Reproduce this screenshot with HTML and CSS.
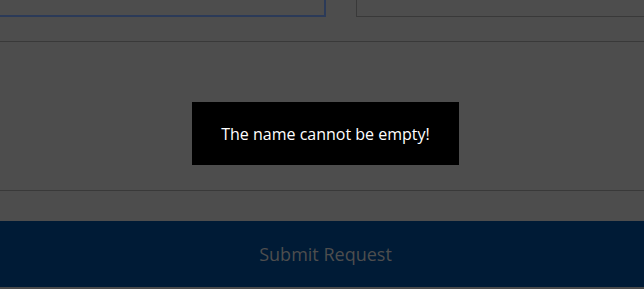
FILE: index.html
```html
<!DOCTYPE html>
<html>
<head>
<meta charset="utf-8">
<link rel="stylesheet" href="styles.css">
</head>
<body>
<div class="page">
  <div class="inputs">
    <div class="field field-focus"></div>
    <div class="field field-open"></div>
  </div>
  <div class="section"></div>
  <div class="submit-bar"><span class="submit-label">Submit Request</span></div>
  <div class="footer-strip"></div>
</div>
<div class="toast">The name cannot be empty!</div>
</body>
</html>
```
FILE: styles.css
```css
* { box-sizing: border-box; }
html, body {
  margin: 0;
  padding: 0;
  background: #4d4d4d;
  font-family: "Open Sans", "Noto Sans", sans-serif;
  overflow: hidden;
}
.page {
  width: 644px;
  height: 289px;
  display: flex;
  flex-direction: column;
  overflow: hidden;
}
.inputs {
  display: grid;
  grid-template-columns: 336px 1fr;
  column-gap: 30px;
  margin-left: -10px;
  height: 17px;
}
.field {
  border: 1px solid #393939;
  border-top: none;
  height: 17px;
}
.field-open { border-right: none; }
.field-focus {
  border: 2px solid #2b3a58;
  border-top: none;
}
.section {
  margin-top: 24px;
  height: 150px;
  border-top: 1px solid #393939;
  border-bottom: 1px solid #393939;
}
.submit-bar {
  margin-top: 30px;
  height: 66px;
  background: #001b36;
  display: flex;
  align-items: center;
  justify-content: center;
  padding-left: 7px;
}
.submit-label {
  color: #4e4e4e;
  font-size: 18px;
}
.footer-strip {
  flex: 1;
  background: #4a4a4a;
}
.toast {
  position: fixed;
  left: 192px;
  top: 102px;
  width: 267px;
  height: 63px;
  background: #000;
  color: #fff;
  font-size: 16px;
  display: flex;
  align-items: center;
  justify-content: center;
}
```
